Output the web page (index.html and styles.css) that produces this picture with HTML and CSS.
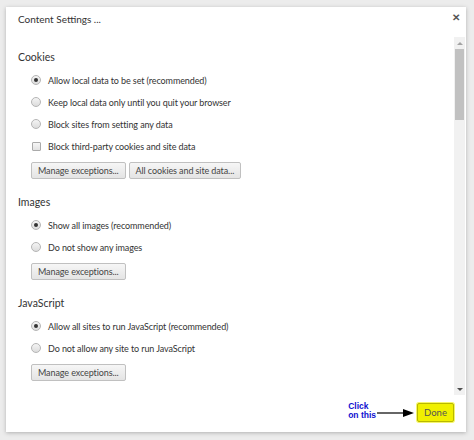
FILE: index.html
```html
<!DOCTYPE html>
<html>
<head>
<meta charset="utf-8">
<link rel="stylesheet" href="styles.css">
</head>
<body>
<div class="dialog">
  <div class="header">
    <div class="title">Content Settings ...</div>
    <div class="close">&#x2715;</div>
  </div>
  <div class="middle">
    <div class="content">
      <div class="section">
        <div class="heading">Cookies</div>
        <div class="row"><span class="radio checked"></span><span>Allow local data to be set (recommended)</span></div>
        <div class="row"><span class="radio"></span><span>Keep local data only until you quit your browser</span></div>
        <div class="row"><span class="radio"></span><span>Block sites from setting any data</span></div>
        <div class="row"><span class="check"></span><span>Block third-party cookies and site data</span></div>
        <div class="buttons"><span class="btn">Manage exceptions...</span><span class="btn">All cookies and site data...</span></div>
      </div>
      <div class="section">
        <div class="heading">Images</div>
        <div class="row"><span class="radio checked"></span><span>Show all images (recommended)</span></div>
        <div class="row"><span class="radio"></span><span>Do not show any images</span></div>
        <div class="buttons"><span class="btn">Manage exceptions...</span></div>
      </div>
      <div class="section">
        <div class="heading">JavaScript</div>
        <div class="row"><span class="radio checked"></span><span>Allow all sites to run JavaScript (recommended)</span></div>
        <div class="row"><span class="radio"></span><span>Do not allow any site to run JavaScript</span></div>
        <div class="buttons"><span class="btn">Manage exceptions...</span></div>
      </div>
    </div>
    <div class="scrollbar">
      <div class="arrow up"></div>
      <div class="thumb"></div>
      <div class="track"></div>
      <div class="arrow down"></div>
    </div>
  </div>
  <div class="footer">
    <div class="hint">Click<br>on this</div>
    <svg class="pointer" width="38" height="10" viewBox="0 0 38 10"><line x1="0" y1="5" x2="28" y2="5" stroke="#000" stroke-width="1.2"/><polygon points="26,1 37,5 26,9" fill="#000"/></svg>
    <div class="done">Done</div>
  </div>
</div>
</body>
</html>
```

FILE: styles.css
```css
html, body {
  margin: 0;
  padding: 0;
}
body {
  width: 474px;
  height: 440px;
  background: #ececec;
  font-family: Lato, "Noto Sans", sans-serif;
  color: #333;
  overflow: hidden;
}
.dialog {
  margin: 7px 0 0 6px;
  width: 460px;
  height: 425px;
  background: #fff;
  box-shadow: 0 1px 4px rgba(0,0,0,0.25);
  display: flex;
  flex-direction: column;
}
.header {
  height: 30px;
  display: flex;
  align-items: center;
  justify-content: space-between;
  padding: 0 6px 6px 12px;
  box-sizing: border-box;
}
.title {
  font-size: 10px;
  color: #333;
}
.close {
  font-size: 10px;
  font-weight: bold;
  color: #555;
  margin-top: -4px;
}
.middle {
  height: 358px;
  display: flex;
}
.content {
  flex: 1;
  padding: 10px 0 0 12px;
  overflow: hidden;
}
.section {
  margin-bottom: 13px;
}
.heading {
  height: 20px;
  line-height: 20px;
  font-size: 10.5px;
  color: #333;
  margin-bottom: 2px;
}
.row {
  height: 22px;
  display: flex;
  align-items: center;
  padding-left: 13px;
  font-size: 9px;
  letter-spacing: -0.1px;
  color: #333;
}
.radio {
  width: 10px;
  height: 10px;
  border-radius: 50%;
  border: 1px solid #b5b5b5;
  background: linear-gradient(#f4f4f4, #dcdcdc);
  margin-right: 7px;
  box-sizing: border-box;
  display: flex;
  align-items: center;
  justify-content: center;
}
.radio.checked::after {
  content: "";
  width: 4px;
  height: 4px;
  border-radius: 50%;
  background: #333;
}
.check {
  width: 9px;
  height: 9px;
  border: 1px solid #aaa;
  border-radius: 1px;
  background: linear-gradient(#f6f6f6, #e2e2e2);
  margin: 0 7px 0 1px;
  box-sizing: border-box;
}
.buttons {
  display: flex;
  gap: 3px;
  margin-top: 5px;
  padding-left: 13px;
}
.btn {
  height: 17px;
  line-height: 15px;
  box-sizing: border-box;
  border: 1px solid #c0c0c0;
  border-radius: 2px;
  background: linear-gradient(#f6f6f6, #e4e4e4);
  padding: 0 6px;
  font-size: 9px;
  letter-spacing: -0.1px;
  color: #444;
}
.scrollbar {
  width: 11px;
  margin-right: 1px;
  background: #f1f1f1;
  display: flex;
  flex-direction: column;
  align-items: center;
}
.arrow {
  height: 12px;
  width: 11px;
  display: flex;
  align-items: center;
  justify-content: center;
}
.arrow.up::after {
  content: "";
  border-left: 3px solid transparent;
  border-right: 3px solid transparent;
  border-bottom: 3px solid #a3a3a3;
}
.arrow.down::after {
  content: "";
  border-left: 3px solid transparent;
  border-right: 3px solid transparent;
  border-top: 3px solid #505050;
}
.thumb {
  width: 9px;
  height: 71px;
  background: #c1c1c1;
}
.track {
  flex: 1;
}
.footer {
  flex: 1;
  display: flex;
  align-items: center;
  justify-content: flex-end;
  padding: 0 12px 2px 0;
}
.hint {
  font-family: "Liberation Sans", Arial, sans-serif;
  font-weight: bold;
  font-size: 8.5px;
  line-height: 9px;
  color: #1010d0;
  margin-right: 1px;
  margin-top: -4px;
}
.pointer {
  margin-right: 2px;
}
.done {
  width: 37px;
  height: 19px;
  box-sizing: border-box;
  background: #f0f000;
  border: 1px solid #b8b800;
  box-shadow: 0 0 0 1px #f6f66a;
  border-radius: 2px;
  font-size: 9.5px;
  line-height: 17px;
  text-align: center;
  color: #555;
}
```
